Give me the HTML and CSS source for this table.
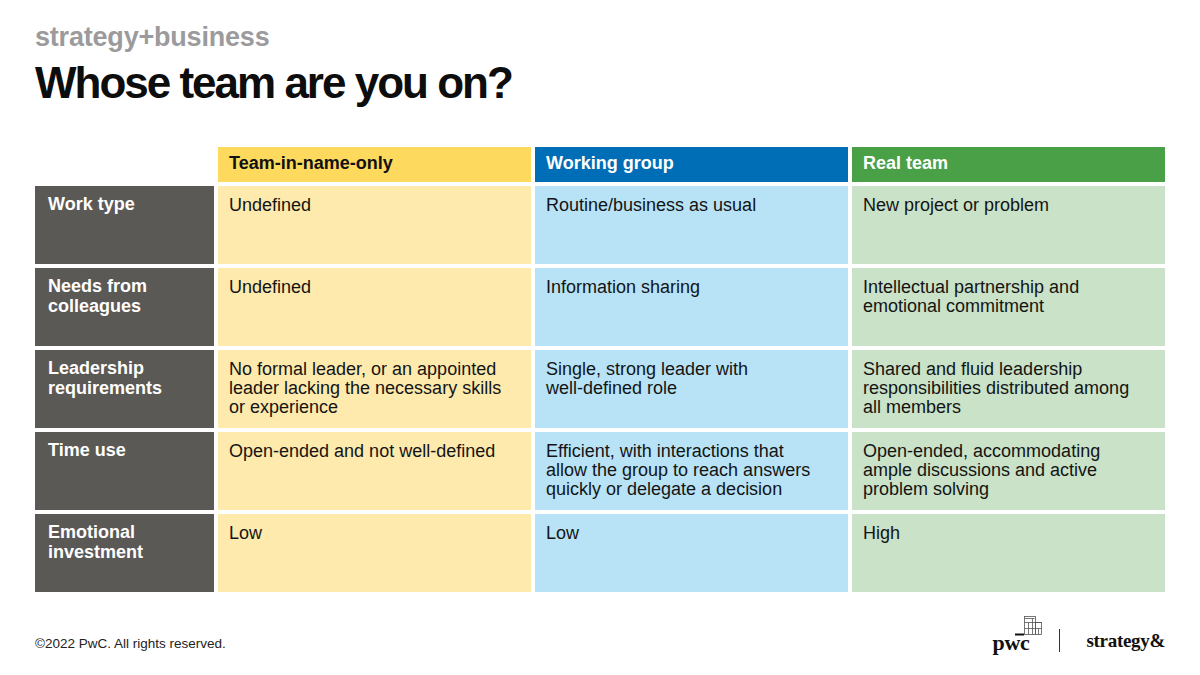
FILE: index.html
```html
<!DOCTYPE html>
<html lang="en">
<head>
<meta charset="utf-8">
<title>Whose team are you on?</title>
<link rel="stylesheet" href="styles.css">
</head>
<body>
<div class="page">
  <div class="brand">strategy+business</div>
  <h1 class="title">Whose team are you on?</h1>

  <div class="grid">
    <div class="corner"></div>
    <div class="head head-yellow">Team-in-name-only</div>
    <div class="head head-blue">Working group</div>
    <div class="head head-green">Real team</div>

    <div class="label">Work type</div>
    <div class="cell yellow">Undefined</div>
    <div class="cell blue">Routine/business as usual</div>
    <div class="cell green">New project or problem</div>

    <div class="label">Needs from<br>colleagues</div>
    <div class="cell yellow">Undefined</div>
    <div class="cell blue">Information sharing</div>
    <div class="cell green">Intellectual partnership and<br>emotional commitment</div>

    <div class="label">Leadership<br>requirements</div>
    <div class="cell yellow">No formal leader, or an appointed<br>leader lacking the necessary skills<br>or experience</div>
    <div class="cell blue">Single, strong leader with<br>well-defined role</div>
    <div class="cell green">Shared and fluid leadership<br>responsibilities distributed among<br>all members</div>

    <div class="label">Time use</div>
    <div class="cell yellow">Open-ended and not well-defined</div>
    <div class="cell blue">Efficient, with interactions that<br>allow the group to reach answers<br>quickly or delegate a decision</div>
    <div class="cell green">Open-ended, accommodating<br>ample discussions and active<br>problem solving</div>

    <div class="label">Emotional<br>investment</div>
    <div class="cell yellow">Low</div>
    <div class="cell blue">Low</div>
    <div class="cell green">High</div>
  </div>

  <div class="footer">
    <div class="copyright">©2022 PwC. All rights reserved.</div>
    <div class="logos">
      <div class="pwc">
        <svg class="pwc-mark" width="28" height="20" viewBox="0 0 28 20" aria-hidden="true">
          <rect x="0" y="17.5" width="9" height="2" fill="#111"/>
          <g fill="none" stroke="#555" stroke-width="0.8">
            <rect x="9.5" y="0.5" width="11" height="18"/>
            <line x1="9.5" y1="2.5" x2="19.5" y2="2.5"/>
            <rect x="20.5" y="6.5" width="6" height="12"/>
            <line x1="9.5" y1="6.5" x2="26.5" y2="6.5"/>
            <line x1="9.5" y1="12.5" x2="26.5" y2="12.5"/>
            <line x1="13.5" y1="6.5" x2="13.5" y2="18.5"/>
            <line x1="17.5" y1="2.5" x2="17.5" y2="18.5"/>
            <line x1="23.5" y1="12.5" x2="23.5" y2="18.5"/>
          </g>
        </svg>
        <span class="pwc-text">pwc</span>
      </div>
      <div class="divider"></div>
      <div class="sand">strategy&amp;</div>
    </div>
  </div>
</div>
</body>
</html>
```
FILE: styles.css
```css
html, body {
  margin: 0;
  padding: 0;
  background: #ffffff;
}

.page {
  width: 1200px;
  height: 675px;
  box-sizing: border-box;
  padding: 22px 35px 0 35px;
  font-family: "Liberation Sans", Arial, sans-serif;
  color: #111;
}

.brand {
  font-size: 27px;
  font-weight: bold;
  color: #9b9b9d;
  line-height: 30px;
  letter-spacing: -0.2px;
}

.title {
  margin: 7px 0 0 0;
  font-size: 44px;
  line-height: 48px;
  font-weight: bold;
  letter-spacing: -2px;
  color: #0d0d0d;
}

.grid {
  margin-top: 40px;
  display: grid;
  grid-template-columns: 179px 313px 313px 313px;
  grid-template-rows: 35px repeat(5, 78px);
  column-gap: 4px;
  row-gap: 4px;
}

.head {
  display: flex;
  align-items: center;
  padding: 0 11px 2px 11px;
  font-size: 18px;
  font-weight: bold;
  color: #fff;
}

.head-yellow { background: #fdd95e; color: #111; }
.head-blue { background: #006eb6; }
.head-green { background: #4aa046; }

.label {
  background: #5b5955;
  color: #fff;
  font-weight: bold;
  font-size: 18px;
  line-height: 20px;
  padding: 8px 13px;
}

.cell {
  font-size: 18px;
  line-height: 19px;
  padding: 10px 11px;
  color: #141414;
}

.yellow { background: #feeaad; }
.blue { background: #b8e3f7; }
.green { background: #c9e2c8; }

.footer {
  margin-top: 24px;
  display: flex;
  justify-content: space-between;
  align-items: flex-end;
}

.copyright {
  font-size: 13.5px;
  color: #222;
  margin-bottom: 22px;
}

.logos {
  display: flex;
  align-items: flex-end;
  margin-bottom: 21px;
}

.pwc {
  display: flex;
  flex-direction: column;
  width: 51px;
}

.pwc-mark {
  align-self: flex-end;
  display: block;
}

.pwc-text {
  font-family: "Liberation Serif", "Times New Roman", serif;
  font-weight: bold;
  font-size: 22px;
  line-height: 18px;
  letter-spacing: -0.3px;
  color: #111;
  margin-top: -2px;
}

.divider {
  width: 1px;
  height: 23px;
  background: #333;
  margin: 0 26px 0 16px;
}

.sand {
  font-family: "Liberation Serif", "Times New Roman", serif;
  font-weight: bold;
  font-size: 19px;
  line-height: 22px;
  color: #111;
  letter-spacing: -0.3px;
}
```
